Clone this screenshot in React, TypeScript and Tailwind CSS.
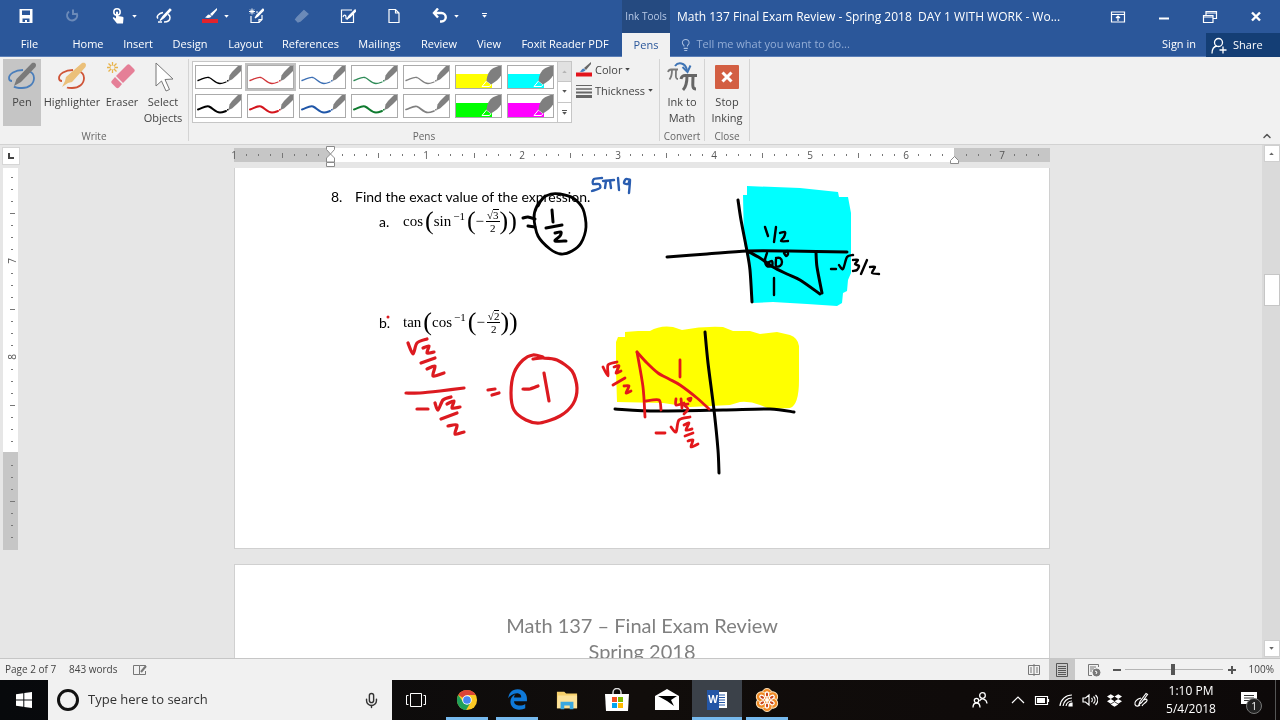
import type { ReactNode } from "react";
import { FaDropbox, FaEdgeLegacy } from "react-icons/fa6";
import { ChevronUp, Lightbulb, Mic } from "lucide-react";

const UI_FONT = "font-['Open_Sans','Noto_Sans',sans-serif]";
const DOC_FONT = "font-['Lato','Liberation_Sans',sans-serif]";
const MATH_FONT = "font-['Liberation_Serif',serif]";

type Point = [number, number];

// "x,y x,y ..." -> rounded path through every point
function smooth(src: string) {
  const pts = src.split(" ").map(p => p.split(",").map(Number) as Point);
  const at = (i: number) => pts[Math.max(0, Math.min(pts.length - 1, i))];
  let d = `M${pts[0][0]} ${pts[0][1]}`;
  for (let i = 0; i < pts.length - 1; i++) {
    const [a, b, c, e] = [at(i - 1), at(i), at(i + 1), at(i + 2)];
    d += `C${b[0] + (c[0] - a[0]) / 7} ${b[1] + (c[1] - a[1]) / 7} ${c[0] - (e[0] - b[0]) / 7} ${c[1] - (e[1] - b[1]) / 7} ${c[0]} ${c[1]}`;
  }
  return d;
}

const tabs = [
  { label: "File", width: "w-[59px] mr-[3px]" },
  { label: "Home", width: "w-[52px]" },
  { label: "Insert", width: "w-[48px]" },
  { label: "Design", width: "w-[56px]" },
  { label: "Layout", width: "w-[55px]" },
  { label: "References", width: "w-[75px]" },
  { label: "Mailings", width: "w-[63px]" },
  { label: "Review", width: "w-[56px]" },
  { label: "View", width: "w-[44px]" },
  { label: "Foxit Reader PDF", width: "w-[108px] mr-[3px]" },
];

const pens = [
  [
    { color: "#000000", w: 1.3 }, { color: "#d13438", w: 1.3 }, { color: "#3c6fb4", w: 1.3 }, { color: "#2e8b57", w: 1.3 }, { color: "#808080", w: 1.3 },
    { color: "#ffff00", w: 0 }, { color: "#00ffff", w: 0 },
  ],
  [
    { color: "#000000", w: 2 }, { color: "#d4141c", w: 2 }, { color: "#1f56a8", w: 2 }, { color: "#0e7a2e", w: 2 }, { color: "#808080", w: 1.7 },
    { color: "#00ff00", w: 0 }, { color: "#ff00ff", w: 0 },
  ],
];

const circleInk = ["538,206 543,198 551,194 560,194 573,198 583,209 586,227 581,243 572,251 561,254 550,249 538,236 534,218 537,206 545,196"];

const blackInk = [
  "523,218 528,217 535,219",
  "528,226 535,227",
  "552,210 553,222",
  "546,228 562,225",
  "555,233 561,232 560,236 555,241 566,241",
  "738,200 741,220 747,251 750,270 752,302",
  "667,257 707,254 747,251 790,251 847,252",
  "747,251 760,258 773,267 787,274 800,280 820,294",
  "816,252 817,267 822,293",
  "705,332 708,363 714,410 718,450 719,473",
  "615,409 657,411 723,410 770,409 794,412",
];

const fineBlackInk = [
  "765,227 768,236",
  "776,227 774,242",
  "780,233 785,232 784,237 781,241 788,241",
  "767,253 765,260 767,266 772,266 772,261 767,263",
  "776,259 776,266 780,266 782,262 780,258 776,258",
  "784,253 786,256 788,254 787,251 784,253",
  "774,278 774,295",
  "831,269 836,269",
  "839,265 843,269 847,257 853,255",
  "853,260 858,260 855,264 859,266 857,270 853,271",
  "867,260 861,274",
  "870,267 875,267 872,273 879,274",
];

const redInk = [
  "408,343 413,354 417,343 427,339",
  "423,348 429,346 427,353 434,352",
  "421,363 435,358",
  "427,369 435,366 433,376 444,373",
  "406,393 420,393 440,391 464,388",
  "417,409 428,409",
  "435,403 438,410 443,400 451,397",
  "447,404 454,401 452,408 460,407",
  "441,419 457,413",
  "448,426 457,425 455,434 464,432",
  "488,390 495,389",
  "492,395 499,393",
  "543,357 533,355 523,360 514,373 511,393 514,410 526,420 540,423 560,416 573,404 577,388 572,371 557,360 543,358 533,359",
  "523,389 530,389 538,386",
  "544,373 549,401",
  "637,352 643,387 645,417",
  "637,352 647,363 658,373 669,379 680,385 697,398 709,409",
  "646,401 659,400 661,410",
  "680,360 680,377",
  "656,433 665,433",
  "671,427 676,432 679,420 690,417",
  "684,425 689,423 686,430 692,429",
  "685,436 693,433",
  "688,441 693,440 691,447 698,444",
  "603,367 608,376 608,365 617,362",
  "614,367 619,366 616,373 621,371",
  "613,385 625,378",
  "624,386 629,386 626,393 631,391",
  "676,399 676,405 684,403",
  "681,399 682,408",
  "688,404 684,405 688,409 684,414",
  "688,399 690,401 691,398 688,399",
];

const blueInk = [
  "602,178 594,179 593,184 599,184 600,188 592,191",
  "603,181 614,180",
  "606,181 605,188",
  "610,181 611,188",
  "618,178 619,190",
  "630,180 626,179 624,183 628,184 630,180 629,193",
];

function Caret({ className = "" }: { className?: string }) {
  return (
    <svg viewBox="0 0 6 4" className={`w-[5px] h-[3px] ${className}`} fill="currentColor">
      <path d="M0 0h6L3 3.5z" />
    </svg>
  );
}

function QuickButton({ label, caret, dim, children }: { label: string; caret?: boolean; dim?: boolean; children: ReactNode }) {
  return (
    <button aria-label={label} className="relative flex w-[46px] h-8 items-center justify-center text-white">
      <svg viewBox="0 0 16 16" className={dim ? "size-4 opacity-30" : "size-4"} fill="none" stroke="currentColor" strokeWidth="1.2">
        {children}
      </svg>
      {caret && <Caret className="absolute right-1" />}
    </button>
  );
}

function TitleBar() {
  return (
    <div className="flex h-[33px] items-stretch">
      <div className="flex w-[622px] shrink-0 pl-[3px]">
        <QuickButton label="Save">
          <path d="M1.500 1h13v14h-13z" fill="currentColor" stroke="none" />
          <path d="M4 2.500h8v4.500H4zM4.500 10.500h7v3.500H9v-2H7v2H4.500z" fill="#2b579a" stroke="none" />
        </QuickButton>
        <QuickButton label="Redo" dim>
          <path d="M5 3.500A5 5 0 1 0 12.500 5M9 1.500v4.500h4.500" strokeWidth="2" />
        </QuickButton>
        <QuickButton label="Touch/Mouse Mode" caret>
          <circle cx="7" cy="4" r="3.200" strokeWidth="1.500" />
          <path d="M6 4.500c0-1.300 2-1.300 2 0V8l4.500.8c.8.200 1 .7 1 1.300L13 15.500H7L3 10.500c-.6-1 .5-1.500 1.200-1L6 10.500z" fill="currentColor" stroke="none" />
        </QuickButton>
        <QuickButton label="Pen">
          <path d="M7 4.500C2.500 5.500 0 8.500 2 10.500M8 14c4 0 6-2 6-4.500 0-1.500-.5-2.500-2-3M2 14h4" strokeWidth="1.500" />
          <path d="M14 1 7 8.500l-3 4 4-3 7-7.500z" fill="currentColor" />
        </QuickButton>
        <QuickButton label="Pen Color" caret>
          <path d="M15 0 8 6l2 2 5-6zM7 6.500c-2 0-2 2-4 3 3 1 6 .5 6.500-1.500z" fill="currentColor" stroke="none" />
          <path d="M0 13h16" stroke="#e3232b" strokeWidth="4" />
        </QuickButton>
        <QuickButton label="New Ink">
          <path d="M8 4h2M3 8v6.500h8l3-3V7M11 14.500v-3h3" />
          <path d="M15 1 9 7l-2 3 3-2 6-6z" fill="currentColor" />
          <path d="M4 .5v6M1 3.500h6M2 1.500l4 4M6 1.500l-4 4" strokeWidth="1" />
        </QuickButton>
        <QuickButton label="Eraser" dim>
          <path d="M10 2.500 3 9.500l3.500 3.500L14 6zM3 9.500l-1.500 2L4 14l2.500-1" fill="currentColor" />
        </QuickButton>
        <QuickButton label="Ink Editor">
          <path d="M12 2H1.500v12.500h12V6" />
          <path d="M15.500 1.500 9 8l-2 3 3-2 6-6" fill="currentColor" />
          <path d="M3 9c1-3 3-2 3 0s0 2 2 2" />
        </QuickButton>
        <QuickButton label="New">
          <path d="M3 1.500h6.500l3.500 3.500v9.500H3zM9.500 1.500V5H13" />
        </QuickButton>
        <QuickButton label="Undo" caret>
          <path d="M2 5h7.500a3.800 3.800 0 0 1 0 8.500H8M6 .5 2 5l4 4.500" strokeWidth="2.400" />
        </QuickButton>
        <button aria-label="Customize Quick Access Toolbar" className="flex w-[46px] h-[31px] flex-col items-center justify-center gap-px pr-1 text-white">
          <span className="w-[5px] h-px bg-white" />
          <Caret />
        </button>
      </div>
      <div className="flex w-12 shrink-0 items-center justify-center bg-[#254a80] text-[10px] text-[#b7c9e6] whitespace-nowrap">Ink Tools</div>
      <h1 className="flex-1 truncate pl-[7px] text-[12px] leading-[33px] text-white">
        Math 137 Final Exam Review - Spring 2018&nbsp; DAY 1 WITH WORK - Wo...
      </h1>
      <div className="flex pr-[1px]">
        {[
          { label: "Ribbon Display Options", art: <path d="M1.500 3h13v10h-13zM1.500 5.500h13M8 12V7M6 9l2-2 2 2" /> },
          { label: "Minimize", art: <path d="M3 9.500h10" strokeWidth="2" /> },
          { label: "Restore", art: <path d="M1.500 6.500h9.500v7H1.500zM1.500 8h9.500M4 6V2.500h10.500v7H11M4 4h10.500" /> },
          { label: "Close", art: <path d="m4 3.500 8 8M12 3.500l-8 8" strokeWidth="2.400" /> },
        ].map(b => (
          <button key={b.label} aria-label={b.label} className="flex w-[46px] items-center justify-center text-white">
            <svg viewBox="0 0 16 16" className="size-4" fill="none" stroke="currentColor" strokeWidth="1.200">{b.art}</svg>
          </button>
        ))}
      </div>
    </div>
  );
}

function TabBar() {
  return (
    <nav className="flex h-6 items-stretch border-b border-[#5b7fb8] text-[11px] text-white">
      {tabs.map(tab => (
        <button key={tab.label} className={`${tab.width} shrink-0 whitespace-nowrap`}>{tab.label}</button>
      ))}
      <button className="w-12 shrink-0 bg-[#f1f1f1] -mb-px text-[#2b579a]">Pens</button>
      <label className="flex flex-1 items-center gap-1 pl-[9px]">
        <Lightbulb className="size-[14px] text-[#a9bfe0]" strokeWidth={1.8} />
        <input aria-label="Tell me" placeholder="Tell me what you want to do..." className="w-full bg-transparent outline-none placeholder:text-[#93add6]" />
      </label>
      <button className="px-2.5 whitespace-nowrap">Sign in</button>
      <button className="flex w-[74px] items-center gap-1.5 bg-[#143e75] -mb-px pl-1">
        <svg viewBox="0 0 17 17" className="size-[17px]" fill="none" stroke="currentColor" strokeWidth="1.300">
          <circle cx="8.500" cy="5.500" r="4" />
          <path d="M2 16.500c0-4 2-7 5-7.500M13 9.500v7M9.500 13h7" />
        </svg>
        Share
      </button>
    </nav>
  );
}

function PenTile({ color, w, selected }: { color: string; w: number; selected?: boolean }) {
  return (
    <button aria-label={`Pen ${color}`} className={`w-[47px] h-6 border border-[#ababab] bg-white ${selected ? "ring-2 ring-[#c2c2c2]" : ""}`}>
      {w > 0 ? (
        <svg viewBox="0 0 45 22" className="block size-full" fill="none">
          <path d="M2 14.500C6 13.500 9 10.500 13 11.500c4 1.500 6 6 11 6 3 0 4-.8 6-1.500" stroke={color} strokeWidth={w} strokeLinecap="round" />
          <path d="M32 15.500l-.3-1.500" stroke={color} strokeWidth="1.500" />
          <path d="M32.500 15 33.500 9.500 36 6 43-1h3v5L41 9l-5 4.500z" fill="#808080" />
        </svg>
      ) : (
        <svg viewBox="0 0 45 22" className="block size-full">
          <path d="M0 8h36v14H0z" fill={color} />
          <path d="m26 20.500 4.500-5.500 4.500 3.500-1.500 2z" fill={color} stroke="#fff" />
          <path d="M30.500 15C31 9 33 4.500 37.500 2L45-1v10.500C43 13 40 15.500 35 18.500z" fill="#7f7f7f" />
        </svg>
      )}
    </button>
  );
}

function RibbonGroup({ label, width, children }: { label: string; width: string; children: ReactNode }) {
  return (
    <section aria-label={label} className={`flex shrink-0 flex-col pt-0.5 ${width}`}>
      <div className="flex flex-1">{children}</div>
      <div className="h-4 text-center text-[10px] leading-4 text-[#666]">{label}</div>
    </section>
  );
}

function Divider() {
  return <div className="w-px shrink-0 bg-[#d4d4d4] mt-0.5 mb-[3px]" />;
}

function ToolButton({ label, width, active, children }: { label: ReactNode; width: string; active?: boolean; children: ReactNode }) {
  return (
    <button className={`flex h-[67px] shrink-0 flex-col items-center pt-[3px] text-[11px] leading-4 text-[#444] ${width} ${active ? "bg-[#c5c5c5]" : ""}`}>
      <svg viewBox="0 0 30 30" className="size-[30px] mb-0.5 shrink-0" fill="none">{children}</svg>
      {label}
    </button>
  );
}

function Ribbon() {
  return (
    <div className="flex h-[88px] border-b border-[#d2d2d2] bg-[#f1f1f1]">
      <RibbonGroup label="Write" width="w-[188px]">
        <div className="flex pl-[3px]">
          <ToolButton label="Pen" width="w-[38px]" active>
            <path d="M16 8C8 8 2 12 2 16c0 2 1 3 3 3M21 9c4 1 6 4 6 7 0 6-5 10-12 10-4 0-7-.5-8-1.500" stroke="#4a7ebb" strokeWidth="1.800" />
            <path d="M25 1c3-1 5 1 3.500 4L14 20l-7 4 2.500-7z" fill="#7a7a7a" />
          </ToolButton>
          <ToolButton label="Highlighter" width="w-[62px]">
            <path d="M16 8C8 8 2 12 2 16c0 2 1 3 3 3M21 9c4 1 6 4 6 7 0 6-5 10-12 10-2 0-4 0-5-.5" stroke="#cf5437" strokeWidth="1.800" />
            <path d="M25 1c3-1 5 1 3.500 4L15 20l-4 1-6 4 3-6 1-4z" fill="#ebc07a" />
          </ToolButton>
          <ToolButton label="Eraser" width="w-[38px]">
            <path d="M5.500 0v11M0 5.500h11M1.500 1.500l8 8M9.500 1.500l-8 8" stroke="#e8b44c" strokeWidth="1.300" />
            <circle cx="5.500" cy="5.500" r="2" fill="#f1f1f1" />
            <path d="M20 3c1-1 2-1 3 0l4 4c1 1 1 2 0 3L16 21 9 14z" fill="#e57f97" />
            <path d="m8 15 7 7-3 3.500c-1 1-2 1-3 0l-4-4c-1-1-1-2 0-3z" fill="#e57f97" />
          </ToolButton>
          <ToolButton label={<span>Select<br />Objects</span>} width="w-[44px]">
            <path d="M8 1v23l5.500-5 4.500 10 3.500-1.500L17 17.500l8-.5z" fill="#fff" stroke="#777" />
          </ToolButton>
        </div>
      </RibbonGroup>
      <Divider />
      <RibbonGroup label="Pens" width="w-[470px]">
        <div className="flex h-[62px] mt-0.5 ml-[3px] border border-[#c6c6c6] bg-white">
          <div className="flex flex-col gap-[5px] pl-0.5 pt-[3px] pr-[3px]">
            {pens.map((row, r) => (
              <div key={r} className="flex gap-[5px]">
                {row.map((pen, i) => <PenTile key={pen.color} {...pen} selected={r === 0 && i === 1} />)}
              </div>
            ))}
          </div>
          <div className="flex w-[14px] flex-col divide-y divide-[#c6c6c6] border-l border-[#c6c6c6] text-[#555]">
            <button aria-label="Previous row" className="flex flex-1 items-center justify-center bg-[#e1e1e1] text-[#b5b5b5]"><Caret className="rotate-180" /></button>
            <button aria-label="Next row" className="flex flex-1 items-center justify-center"><Caret /></button>
            <button aria-label="More pens" className="flex flex-1 flex-col items-center justify-center gap-px"><span className="w-[5px] h-px bg-[#555]" /><Caret /></button>
          </div>
        </div>
        <div className="flex flex-col items-start pl-1 text-[11px] leading-[21px] text-[#444]">
          <button className="flex items-center gap-[3px]">
            <svg viewBox="0 0 16 16" className="size-4">
              <path d="M15 0 8 6l2 2 5-6z" fill="#666" />
              <path d="M7.500 6.500c-2 0-2 3-4 3 3 1 5.500 0 6-1.500z" fill="#4a7ebb" />
              <path d="M0 10.500h16v4H0z" fill="#e3141c" />
            </svg>
            Color <Caret />
          </button>
          <button className="flex items-center gap-[3px]">
            <svg viewBox="0 0 16 16" className="size-4" stroke="#666">
              <path d="M0 2.500h16" /><path d="M0 6h16" strokeWidth="1.500" /><path d="M0 9.500h16" strokeWidth="2" /><path d="M0 13.500h16" strokeWidth="3" />
            </svg>
            Thickness <Caret />
          </button>
        </div>
      </RibbonGroup>
      <Divider />
      <RibbonGroup label="Convert" width="w-[44px]">
        <ToolButton label={<span>Ink to<br />Math</span>} width="w-full">
          <path d="M1 10c1-3 2-2.500 4-2.500h6M5 8c0 4-.5 7-2.500 9.500M9 8c0 5-1 9 2 9" stroke="#7a7a7a" strokeWidth="1.800" />
          <path d="M14 17c1-4 3-3.500 5-3.500h11M20 14c0 6-1 11-4 14M26 14c0 8-1.500 13 3 13" stroke="#666" strokeWidth="3" />
          <path d="M8 4c3-4 10-4 12 4" stroke="#3f74b5" strokeWidth="2" />
          <path d="m15.500 5 5 5L23.500 3.500" stroke="#3f74b5" strokeWidth="2" />
        </ToolButton>
      </RibbonGroup>
      <Divider />
      <RibbonGroup label="Close" width="w-[44px]">
        <ToolButton label={<span>Stop<br />Inking</span>} width="w-full">
          <rect x="3" y="3" width="24" height="24" rx="1" fill="#d35f43" />
          <path d="m10.500 10.500 9 9M19.500 10.500l-9 9" stroke="#fff" strokeWidth="3" />
        </ToolButton>
      </RibbonGroup>
      <Divider />
      <div className="flex flex-1 items-end justify-end pr-[7px] pb-0.5">
        <button aria-label="Collapse the Ribbon" className="text-[#555]"><ChevronUp className="size-3" strokeWidth={3} /></button>
      </div>
    </div>
  );
}

function HorizontalRuler() {
  return (
    <div className="relative mt-[3px] mb-1.5 flex h-[14px] w-full max-w-[816px]">
      <div className="w-24 bg-[#c6c6c6]" />
      <div className="flex-1 bg-white" />
      <div className="w-24 bg-[#c6c6c6]" />
      <div className="absolute inset-y-0 -left-1.5 flex items-center text-[10px] leading-[14px] text-[#555]">
        {Array.from({ length: 68 }, (_, i) => (
          <span key={i} className="flex w-3 justify-center">
            {i === 8 || i === 60 ? null : i % 8 === 0 ? Math.abs(i / 8 - 1) : <i className={i % 8 === 4 ? "w-px h-[5px] bg-[#777]" : "w-px h-0.5 bg-[#777]"} />}
          </span>
        ))}
      </div>
      <svg viewBox="0 0 9 22" className="absolute -top-0.5 left-[92px] w-[9px] h-[22px]" fill="#fff" stroke="#8a8a8a">
        <path d="M.5.5h8v3L4.500 8l-4-4.500zM4.500 8l4 4v4h-8v-4zM.5 16.500h8v4h-8z" />
      </svg>
      <svg viewBox="0 0 9 9" className="absolute top-2 right-[91px] size-[9px]" fill="#fff" stroke="#8a8a8a">
        <path d="m4.500.5 4 4v3h-8v-3z" />
      </svg>
    </div>
  );
}

function VerticalRuler() {
  return (
    <div className="flex w-[22px] shrink-0 flex-col">
      <button aria-label="Tab selector" className="mt-0.5 ml-0.5 flex size-[18px] items-center justify-center border border-[#d6d6d6] bg-white">
        <svg viewBox="0 0 6 6" className="size-1.5" fill="none" stroke="#444" strokeWidth="2"><path d="M1 0v5h5" /></svg>
      </button>
      <div className="mt-[3px] ml-[3px] w-[15px] bg-linear-to-b from-white from-[284px] to-[#c6c6c6] to-[284px] pt-[3px] pb-[7px]">
        {Array.from({ length: 31 }, (_, i) => (
          <span key={i} className="flex h-3 items-center justify-center pl-[3px] text-[10px] leading-3 text-[#555]">
            {i === 23 ? null : i % 8 === 7 ? <b className="-rotate-90 font-normal">{7 + (i - 7) / 8}</b> : <i className={i % 8 === 3 ? "w-[5px] h-px bg-[#777]" : "w-0.5 h-px bg-[#777]"} />}
          </span>
        ))}
      </div>
    </div>
  );
}

function Expression({ outer, inner, radicand }: { outer: string; inner: string; radicand: number }) {
  return (
    <span className={`flex items-center text-[15px] leading-6 ${MATH_FONT}`}>
      {outer}
      <span className="ml-0.5 text-[26px]">(</span>
      {inner}
      <sup className="top-[-5px] ml-0.5 text-[11px]">−1</sup>
      <span className="ml-0.5 text-[26px]">(</span>
      <span>−</span>
      <span className="ml-0.5 flex flex-col items-center text-[11px] leading-3">
        <span className="flex border-b border-black px-px">
          √<span className="border-t border-black leading-[11px]">{radicand}</span>
        </span>
        <span>2</span>
      </span>
      <span className="text-[26px]">)</span>
      <span className="text-[26px]">)</span>
    </span>
  );
}

function Strokes({ paths, color, width }: { paths: string[]; color: string; width: number }) {
  return (
    <g stroke={color} strokeWidth={width} fill="none" strokeLinecap="round" strokeLinejoin="round">
      {paths.map(p => <path key={p} d={smooth(p)} />)}
    </g>
  );
}

function InkLayer() {
  return (
    <svg viewBox="235 168 814 380" preserveAspectRatio="xMinYMin" className="pointer-events-none absolute inset-0 size-full mix-blend-multiply">
      <path
        d="M747 186 800 188 838 192 839 197 848 197 851 213 851 273 848 280 847 291 843 293 842 303 837 306 807 304 773 302 752 303 750 270 744 243 743 195 747 195z"
        fill="#00ffff"
      />
      <path
        d="M625 332 638 331 650 331Q660 325 673 327L682 330Q703 326 723 327L733 331 750 331 760 334 777 332 790 335Q798 338 799 346L799 380Q799 405 790 408L770 409 760 405Q750 401 740 402L730 405 690 407 663 403 617 402 616 370 616 342 618 337 625 337z"
        fill="#ffff00"
      />
      <Strokes paths={circleInk} color="#000000" width={2.8} />
      <Strokes paths={blackInk} color="#000000" width={3} />
      <Strokes paths={fineBlackInk} color="#000000" width={2.4} />
      <Strokes paths={redInk.slice(0, 15)} color="#dc1a20" width={3.2} />
      <Strokes paths={redInk.slice(15)} color="#e3171b" width={2.8} />
      <Strokes paths={blueInk} color="#2a5db0" width={2.4} />
      <circle cx="388" cy="317" r="1.500" fill="#dc1a20" />
    </svg>
  );
}

function Workspace() {
  return (
    <main className="flex flex-1 min-h-0 overflow-hidden bg-[#e6e6e6]">
      <VerticalRuler />
      <div className="flex flex-1 min-w-0 flex-col items-center overflow-hidden">
        <HorizontalRuler />
        <div className={`flex w-full flex-1 min-h-0 flex-col items-center gap-[15px] overflow-hidden text-black ${DOC_FONT}`}>
          <article className="relative w-full max-w-[816px] shrink-0 border border-t-0 border-[#d0d0d0] bg-white pl-24 pt-4 pb-[213px] text-[14px]">
            <div className="flex h-6 items-center">
              <span className="w-6">8.</span>
              <p>Find the exact value of the expression.</p>
            </div>
            <div className="flex h-[26px] items-center pl-12">
              <span className="w-6">a.</span>
              <Expression outer="cos" inner="sin" radicand={3} />
            </div>
            <div className="mt-[75px] flex h-[26px] items-center pl-12">
              <span className="w-6">b.</span>
              <Expression outer="tan" inner="cos" radicand={2} />
            </div>
            <InkLayer />
          </article>
          <article className="w-full max-w-[816px] shrink-0 border border-[#d0d0d0] bg-white pt-[47px] pb-24 text-center text-[20px] leading-[26px] text-[#808080]">
            <p>Math 137 – Final Exam Review</p>
            <p>Spring 2018</p>
          </article>
        </div>
      </div>
      <div className="flex w-[18px] shrink-0 flex-col items-center bg-[#dadada] pl-px pb-px text-[#666]">
        <button aria-label="Scroll up" className="flex w-4 h-[17px] items-center justify-center border border-[#cfcfcf] bg-white"><Caret className="rotate-180" /></button>
        <div className="mt-[112px] w-4 h-8 border border-[#c6c6c6] bg-white" />
        <div className="flex-1" />
        <button aria-label="Scroll down" className="flex w-4 h-[17px] items-center justify-center border border-[#cfcfcf] bg-white"><Caret /></button>
      </div>
    </main>
  );
}

function StatusBar() {
  return (
    <footer className="flex h-[22px] items-center border-t border-[#c6c6c6] bg-[#f1f1f1] pl-[5px] pr-1.5 text-[10px] text-[#444]">
      <span className="w-16">Page 2 of 7</span>
      <span className="w-16">843 words</span>
      <svg viewBox="0 0 14 14" className="size-[14px]" fill="none" stroke="#777">
        <path d="M6.500 2.500H.5v9h6zM6.500 2.500h6v2M6.500 11.500h6V8M8 9l5-5" />
        <path d="m8 9 5-6" strokeWidth="2" />
      </svg>
      <div className="ml-auto flex h-full items-center">
        <button aria-label="Read Mode" className="flex h-full w-[30px] items-center justify-center">
          <svg viewBox="0 0 14 12" className="w-[14px] h-3" fill="none" stroke="#777"><path d="M1.500 1.500h11v9h-11zM7 0v12M3 4h2M3 6h2M3 8h2M9 4h2M9 6h2M9 8h2" /></svg>
        </button>
        <button aria-label="Print Layout" className="flex h-full w-[26px] items-center justify-center bg-[#c8c8c8]">
          <svg viewBox="0 0 14 14" className="size-[14px]" fill="none" stroke="#555"><path d="M1.500.5h11v13h-11zM3 3.500h8M3 5.500h8M3 7.500h8M3 9.500h8M3 11.500h8" /></svg>
        </button>
        <button aria-label="Web Layout" className="flex h-full w-[34px] items-center justify-center pl-1">
          <svg viewBox="0 0 14 14" className="size-[14px]" fill="none" stroke="#777"><path d="M11.500 4V1.500h-10v11H5M3 4h6M3 6h4M3 8h2" /><circle cx="9.500" cy="9.500" r="3.500" fill="#777" /><path d="m8 8 2 1-1 2" stroke="#fff" /></svg>
        </button>
        <button aria-label="Zoom out" className="flex h-full w-4 items-center justify-center"><span className="w-2 h-0.5 bg-[#555]" /></button>
        <input
          type="range" aria-label="Zoom" min={0} max={100} defaultValue={49}
          className="w-[98px] appearance-none bg-transparent [&::-webkit-slider-runnable-track]:h-px [&::-webkit-slider-runnable-track]:bg-[#b5b5b5] [&::-webkit-slider-thumb]:appearance-none [&::-webkit-slider-thumb]:w-1 [&::-webkit-slider-thumb]:h-[11px] [&::-webkit-slider-thumb]:-mt-[5px] [&::-webkit-slider-thumb]:bg-[#555]"
        />
        <button aria-label="Zoom in" className="flex h-full w-[18px] items-center justify-center">
          <svg viewBox="0 0 8 8" className="size-2" stroke="#555" strokeWidth="2"><path d="M4 0v8M0 4h8" /></svg>
        </button>
        <span className="w-[33px] text-right">100%</span>
      </div>
    </footer>
  );
}

const apps = [
  {
    name: "Chrome", running: true,
    art: (
      <svg viewBox="0 0 24 24" className="size-[22px]">
        <circle cx="12" cy="12" r="11" fill="#fbc924" />
        <path d="M12 12 2.500 6.500A11 11 0 0 1 21.500 6.500H12z" fill="#dc4437" />
        <path d="M2.500 6.500A11 11 0 0 0 11 23l5-8.500-8 0z" fill="#1fa05a" />
        <circle cx="12" cy="12" r="5.200" fill="#fff" />
        <circle cx="12" cy="12" r="4.200" fill="#4686f3" />
      </svg>
    ),
  },
  { name: "Edge", running: true, art: <FaEdgeLegacy className="size-[21px] text-[#0f79d8]" /> },
  {
    name: "File Explorer",
    art: (
      <svg viewBox="0 0 24 20" className="w-[22px] h-5">
        <path d="M1 1h8l2 2h12v16H1z" fill="#f6d06b" />
        <path d="M2 5h21v14H1z" fill="#fce29a" />
        <path d="M5 20v-8h14v8h-4v-4H9v4z" fill="#3aa8e0" />
      </svg>
    ),
  },
  {
    name: "Store",
    art: (
      <svg viewBox="0 0 24 24" className="size-6">
        <path d="M8 7V4.500a4 4 0 0 1 8 0V7" fill="none" stroke="#ddd" strokeWidth="1.500" />
        <path d="M0 6h24l-1 17H1z" fill="#fff" />
        <path d="M7 9h5v5H7z" fill="#f25022" /><path d="M13 9h5v5h-5z" fill="#7fba00" /><path d="M7 15h5v5H7z" fill="#00a4ef" /><path d="M13 15h5v5h-5z" fill="#ffb900" />
      </svg>
    ),
  },
  {
    name: "Mail",
    art: (
      <svg viewBox="0 0 24 22" className="w-6 h-[22px]">
        <path d="M0 7 12 0l12 7v14H0z" fill="#fff" />
        <path d="M3 7h19l-6 4 3 6-7-5z" fill="#000" />
      </svg>
    ),
  },
  {
    name: "Word", running: true, active: true,
    art: (
      <div className="flex items-center">
        <span className="flex h-5 w-3 items-center justify-center bg-[#2456a6] text-[10px] font-bold text-white">W</span>
        <svg viewBox="0 0 8 16" className="w-2 h-4"><path d="M0 0h8v16H0z" fill="#fff" /><path d="M0 3h6M0 5.500h6M0 8h6M0 10.500h6M0 13h6" stroke="#2456a6" /></svg>
      </div>
    ),
  },
  {
    name: "GoToMeeting", running: true,
    art: (
      <svg viewBox="-12 -12 24 24" className="size-6">
        {[0, 60, 120, 180, 240, 300].map(a => <circle key={a} cx="0" cy="-6.500" r="5" fill="#f08a24" stroke="#fbe3bd" transform={`rotate(${a})`} />)}
        <circle r="7" fill="#f08a24" />
        {[0, 60, 120, 180, 240, 300].map(a => <ellipse key={a} cx="0" cy="-5.500" rx="1.700" ry="2.600" fill="#c9441a" stroke="#fff" strokeWidth="1.200" transform={`rotate(${a})`} />)}
        <circle r="2" fill="#fff" />
      </svg>
    ),
  },
];

const tray = [
  { label: "Show hidden icons", width: "w-6", art: <path d="m2 11 6-6 6 6" /> },
  { label: "Battery", width: "w-6", art: <g><path d="M1.500 4.500h12v8h-12zM14.500 7v3" /><path d="M3 6h8v5H3z" fill="currentColor" stroke="none" /></g> },
  { label: "Network", width: "w-6", art: <g><path d="M2 14A12 12 0 0 1 14 3M5 14a9 9 0 0 1 9-8M8 14a6 6 0 0 1 6-5" /><path d="M11 14a3 3 0 0 1 3-3v3z" fill="currentColor" /></g> },
  { label: "Volume", width: "w-6", art: <path d="M1 6h2.500L7 3v10l-3.500-3H1zM9.500 6c1 1 1 3 0 4M11.500 4.500c2 2 2 5 0 7M13.500 3c3 3 3 7 0 10" /> },
];

function Taskbar() {
  return (
    <nav aria-label="Taskbar" className="flex h-10 items-stretch bg-linear-to-r from-[#07090c] via-[#110d0b] to-[#0d0909] text-white">
      <button aria-label="Start" className="flex w-12 shrink-0 items-center justify-center">
        <svg viewBox="0 0 16 16" className="size-4" fill="#fff"><path d="M0 2.300 7.300 1.300v6.300H0zM8.300 1.100 16 0v7.600H8.300zM0 8.500h7.300v6.300L0 13.800zM8.300 8.500H16V16l-7.700-1.100z" /></svg>
      </button>
      <label className="flex w-[344px] shrink-0 items-center bg-[#f1f1f1] pl-2 pr-3 text-[#333]">
        <svg viewBox="0 0 24 24" className="size-6" fill="none" stroke="#111" strokeWidth="3"><circle cx="12" cy="12" r="9.500" /></svg>
        <input aria-label="Search" placeholder="Type here to search" className="flex-1 bg-transparent pl-2 text-[13px] outline-none placeholder:text-[#333]" />
        <Mic className="size-[17px]" strokeWidth={2} />
      </label>
      <button aria-label="Task View" className="flex w-[50px] shrink-0 items-center justify-center pr-0.5">
        <svg viewBox="0 0 20 14" className="w-5 h-[14px]" fill="none" stroke="#fff"><path d="M4.500.5h11v13h-11zM2.500 2.500h-2v9h2M17.500 2.500h2v9h-2" /></svg>
      </button>
      {apps.map(app => (
        <button key={app.name} aria-label={app.name} className={`flex w-[50px] shrink-0 flex-col items-center ${app.active ? "bg-[#3b4149]" : ""}`}>
          <span className="flex flex-1 items-center pt-0.5">{app.art}</span>
          <span className={`h-[3px] ${app.running ? "bg-[#76b9ed]" : ""} ${app.active ? "w-full" : "w-[42px]"}`} />
        </button>
      ))}
      <div className="ml-auto flex items-center">
        <button aria-label="People" className="mr-2 flex w-9 justify-center">
          <svg viewBox="0 0 16 16" className="size-4" fill="none" stroke="currentColor" strokeWidth="1.300">
            <circle cx="10.500" cy="3.500" r="2.800" /><path d="M7.500 9c1.500-3.500 7-2.500 7.500 2.500" /><circle cx="4.500" cy="8.500" r="2.200" /><path d="M1 15.500c0-6 7-6 7 0" />
          </svg>
        </button>
        {tray.map(t => (
          <button key={t.label} aria-label={t.label} className={`flex justify-center ${t.width}`}>
            <svg viewBox="0 0 16 16" className="size-4" fill="none" stroke="currentColor" strokeWidth="1.200">{t.art}</svg>
          </button>
        ))}
        <button aria-label="Dropbox" className="flex w-6 justify-center"><FaDropbox className="size-[15px]" /></button>
        <button aria-label="Windows Ink" className="flex w-[30px] justify-center">
          <svg viewBox="0 0 16 16" className="size-4" fill="none" stroke="currentColor" strokeWidth="1.200">
            <path d="m13 1.500-6 8-1 3 2.500-2 6-8zM8 6C4 7 1 10 2 12.500s4 1.500 5 .5M11 8c3-2 4 0 2 2s-3 2-4 4" />
          </svg>
        </button>
        <button className="w-[70px] text-center text-[12px] leading-[18px]">1:10 PM<br />5/4/2018</button>
        <button aria-label="Notifications" className="relative flex w-[49px] justify-center pr-1">
          <svg viewBox="0 0 16 16" className="size-4"><path d="M0 0h16v12H9l-3 3.500V12H0z" fill="#fff" /><path d="M3 3.500h10M3 6h10M3 8.500h7" stroke="#333" /></svg>
          <span className="absolute left-5 top-1.5 flex size-4 items-center justify-center rounded-full border border-[#777] bg-[#222] text-[10px]">1</span>
        </button>
        <div className="h-10 w-[5px] border-l border-[#555]" />
      </div>
    </nav>
  );
}

export default function App() {
  return (
    <div className={`flex h-screen flex-col overflow-hidden ${UI_FONT}`}>
      <header className="shrink-0 bg-[#2b579a]">
        <TitleBar />
        <TabBar />
        <Ribbon />
      </header>
      <Workspace />
      <StatusBar />
      <Taskbar />
    </div>
  );
}
